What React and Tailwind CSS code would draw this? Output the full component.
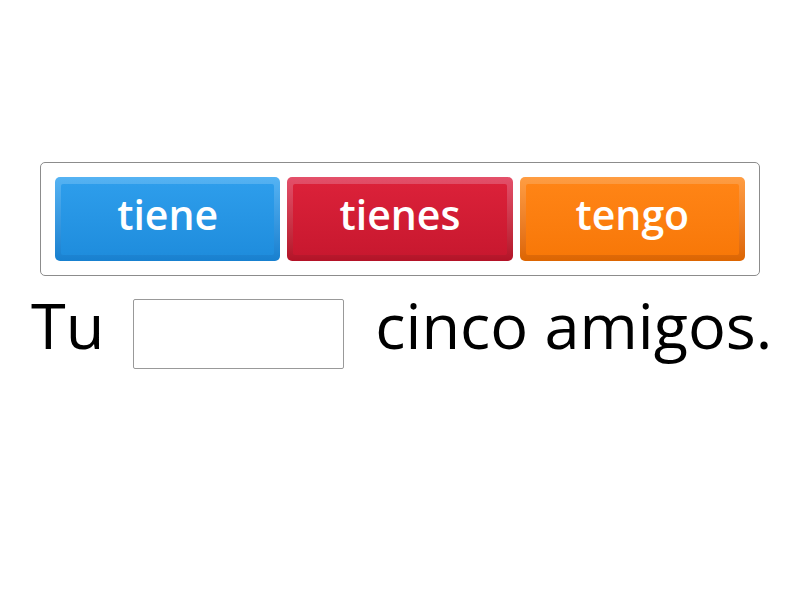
import React from "react";

const options = [
  { label: "tiene", edge: "bg-gradient-to-b from-[#55b3f3] to-[#1780cf]", face: "bg-gradient-to-b from-[#2d9deb] to-[#1f8ddd]" },
  { label: "tienes", edge: "bg-gradient-to-b from-[#e4506a] to-[#b31227]", face: "bg-gradient-to-b from-[#db2139] to-[#c8182f]" },
  { label: "tengo", edge: "bg-gradient-to-b from-[#ff9d42] to-[#dc6500]", face: "bg-gradient-to-b from-[#ff8415] to-[#f87808]" },
];

function Tile({ label, edge, face }) {
  return (
    <div className={`flex-1 h-[84px] rounded-[5px] p-[6px] pt-[7px] ${edge}`}>
      <div className={`h-full rounded-[2px] flex items-center justify-center ${face}`}>
        <span className="text-white font-semibold text-[41px] leading-none pb-[10px]">{label}</span>
      </div>
    </div>
  );
}

export default function App() {
  return (
    <div
      className="w-[800px] h-[600px] bg-white pt-[162px]"
      style={{ fontFamily: '"Open Sans", sans-serif' }}
    >
      <div className="mx-[40px] w-[720px] h-[114px] border border-[#8c8c8c] rounded-[5px] px-[14px] pt-[14px] pb-[13px] flex gap-[7px]">
        {options.map((o) => (
          <Tile key={o.label} {...o} />
        ))}
      </div>
      <div className="flex items-center mt-[17px] pl-[31px] text-black text-[63px] leading-none">
        <span className="pb-[18px]">Tu</span>
        <div className="ml-[29px] w-[211px] h-[70px] border border-[#999] rounded-[2px] bg-white" />
        <span className="ml-[31px] pb-[18px]">cinco amigos.</span>
      </div>
    </div>
  );
}
